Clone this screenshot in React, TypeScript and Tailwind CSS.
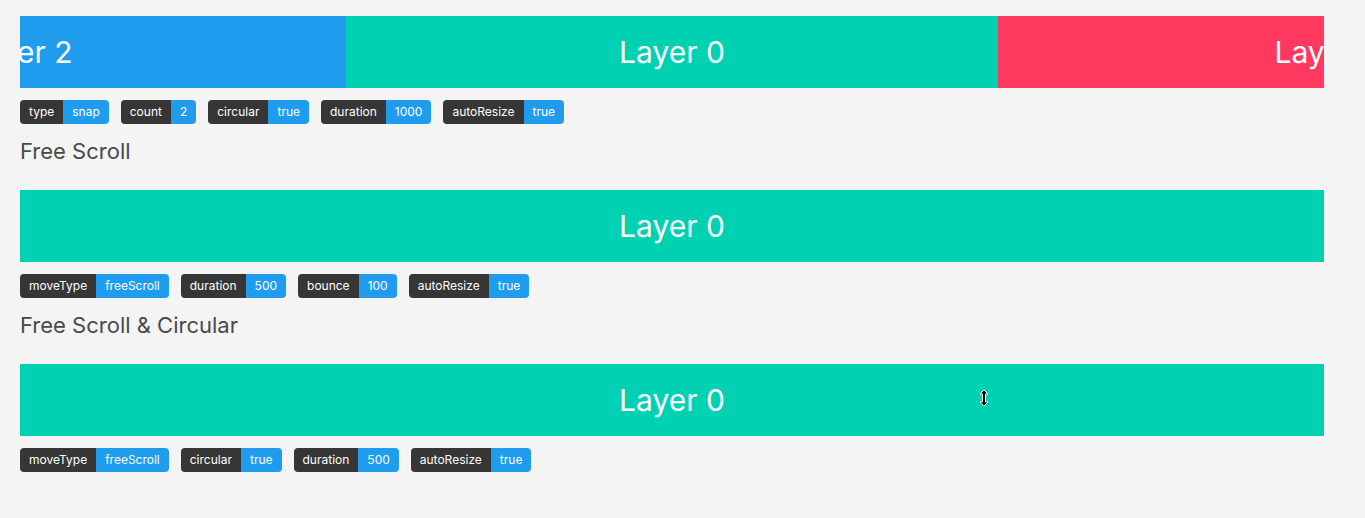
import React from "react";

type TagItem = [string, string];

function Tags({ items }: { items: TagItem[] }) {
  return (
    <div className="mt-3 flex flex-wrap gap-3">
      {items.map(([k, v]) => (
        <div key={k} className="flex h-6 text-[12px] leading-6 text-white">
          <span className="rounded-l-[4px] bg-[#363636] px-[9px]">{k}</span>
          <span className="rounded-r-[4px] bg-[#209cee] px-[9px]">{v}</span>
        </div>
      ))}
    </div>
  );
}

function Panel({ color, label }: { color: string; label: string }) {
  return (
    <div className={`flex h-[72px] w-[652px] shrink-0 items-center justify-center text-[30px] text-white ${color}`}>
      {label}
    </div>
  );
}

function Heading({ children }: { children: React.ReactNode }) {
  return <h2 className="mt-3 mb-6 text-[22px] leading-[30px] text-[#4a4a4a]">{children}</h2>;
}

export default function App() {
  return (
    <div
      className="relative min-h-[518px] bg-[#f4f4f4] px-5 pt-4"
      style={{ fontFamily: "Inter, 'Noto Sans', sans-serif" }}
    >
      <div className="w-[1304px]">
        <div className="h-[72px] overflow-hidden">
          <div className="flex -translate-x-[326px]">
            <Panel color="bg-[#209cee]" label="Layer 2" />
            <Panel color="bg-[#00d1b2]" label="Layer 0" />
            <Panel color="bg-[#ff3860]" label="Layer 1" />
          </div>
        </div>
        <Tags
          items={[
            ["type", "snap"],
            ["count", "2"],
            ["circular", "true"],
            ["duration", "1000"],
            ["autoResize", "true"],
          ]}
        />
        <Heading>Free Scroll</Heading>
        <div className="flex h-[72px] items-center justify-center bg-[#00d1b2] text-[30px] text-white">Layer 0</div>
        <Tags
          items={[
            ["moveType", "freeScroll"],
            ["duration", "500"],
            ["bounce", "100"],
            ["autoResize", "true"],
          ]}
        />
        <Heading>Free Scroll &amp; Circular</Heading>
        <div className="relative flex h-[72px] items-center justify-center bg-[#00d1b2] text-[30px] text-white">
          Layer 0
          <svg className="absolute left-[959px] top-[25px]" width="10" height="18" viewBox="0 0 10 18">
            <path
              d="M5 1 L9 5 L6.5 5 L6.5 13 L9 13 L5 17 L1 13 L3.5 13 L3.5 5 L1 5 Z"
              fill="#000"
              stroke="#fff"
              strokeWidth="1"
              strokeLinejoin="round"
            />
          </svg>
        </div>
        <Tags
          items={[
            ["moveType", "freeScroll"],
            ["circular", "true"],
            ["duration", "500"],
            ["autoResize", "true"],
          ]}
        />
      </div>
    </div>
  );
}
